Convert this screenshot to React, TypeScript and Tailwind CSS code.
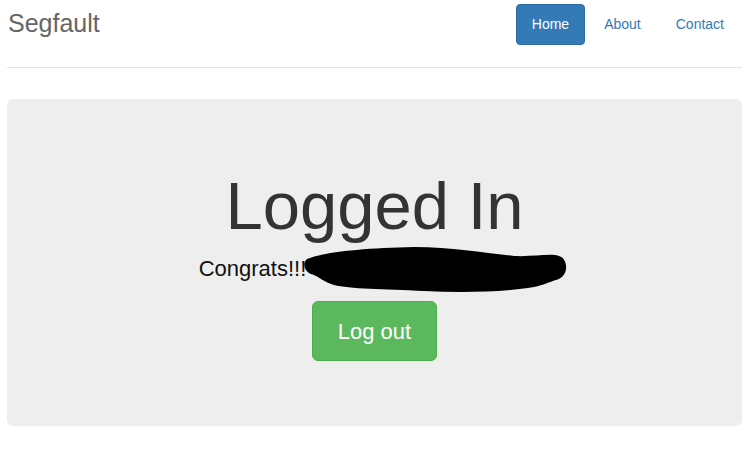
import React from "react";

const navs = [
  { id: 1, name: "Home", active: true },
  { id: 2, name: "About", active: false },
  { id: 3, name: "Contact", active: false },
];

const Header = () => {
  return (
    <header className="h-[68px] flex justify-between items-start border-b border-[#e5e5e5]">
      <a href="#" className="pt-[10px] pl-px text-[25px] leading-[27px] text-[#666]">
        Segfault
      </a>
      <nav className="pt-[4px] pr-[2px]">
        <ul className="flex gap-[3px]">
          {navs.map((item) => (
            <li key={item.id}>
              <a
                href="#"
                className={`h-[41px] flex items-center px-[15px] text-[14px] rounded-[4px] border ${
                  item.active
                    ? "bg-[#337ab7] border-[#2e6da4] text-white"
                    : "border-transparent text-[#337ab7]"
                }`}
              >
                {item.name}
              </a>
            </li>
          ))}
        </ul>
      </nav>
    </header>
  );
};

// blacked-out user name, drawn over the text
const Redaction = () => (
  <svg
    className="absolute left-[-2px] top-[-7px] w-[264px] h-[48px]"
    viewBox="0 0 264 48"
    fill="none"
  >
    <path
      d="M3 12 C20 5 60 1 110 0 C150 0 180 6 210 9 C230 10 245 6 255 9 C265 12 265 30 252 33 C245 35 240 38 230 40 C200 45 160 46 120 44 C80 42 45 42 30 38 C20 35 15 30 10 28 C0 26 -2 16 3 12 Z"
      fill="#000"
    />
  </svg>
);

export default function App() {
  return (
    <div
      className="w-[750px] h-[460px] bg-white pl-[7px] pr-[8px] overflow-hidden"
      style={{ fontFamily: '"Liberation Sans", Arial, sans-serif' }}
    >
      <Header />
      <main className="mt-[31px] h-[327px] rounded-[6px] bg-[#eeeeee] flex flex-col items-center">
        <h1 className="mt-[71px] text-[67px] leading-[72px] text-[#333]">Logged In</h1>
        <p className="mt-[12px] flex text-[22px] leading-[30px] text-[#111]">
          <span>Congrats!!!</span>
          <span className="relative inline-block w-[244px] h-[30px]">
            <Redaction />
          </span>
        </p>
        <button className="mt-[17px] w-[125px] h-[60px] rounded-[6px] border border-[#4cae4c] bg-[#5cb85c] text-white text-[22px]">
          Log out
        </button>
      </main>
    </div>
  );
}
